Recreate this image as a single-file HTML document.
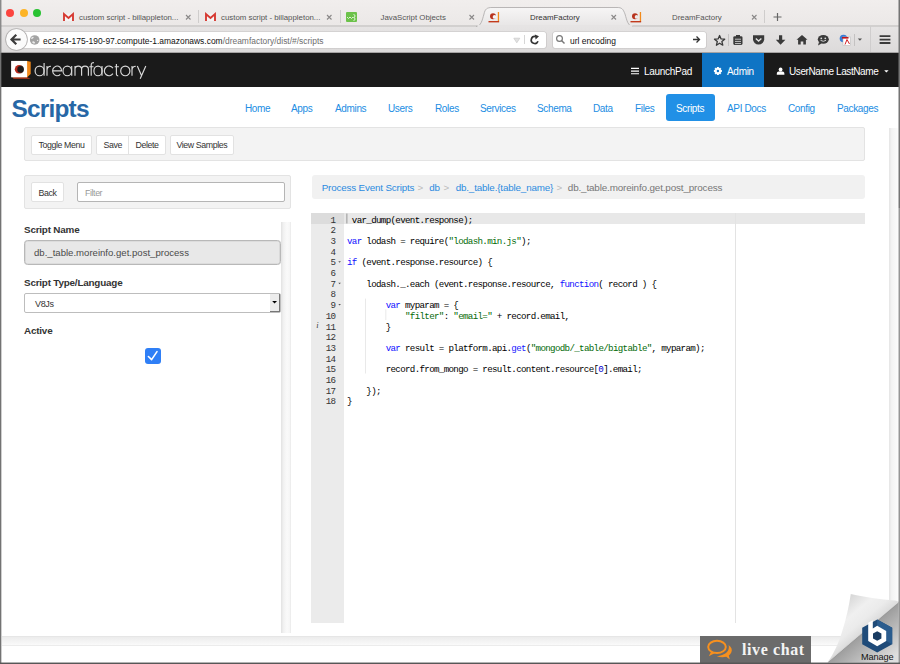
<!DOCTYPE html>
<html><head><meta charset="utf-8">
<style>
*{margin:0;padding:0;box-sizing:border-box}
html,body{width:900px;height:664px;overflow:hidden;background:#fff;font-family:"Liberation Sans",sans-serif}
.a{position:absolute}
.t{position:absolute;white-space:nowrap;line-height:1}
#tabbar{left:0;top:0;width:900px;height:26px;background:#e8e6e5}
#toolbar{left:0;top:26px;width:900px;height:27px;background:#dedcdc;border-top:1px solid #cfcdcc;border-bottom:1px solid #b9b7b7}
#hdr{left:0;top:53px;width:900px;height:34px;background:#1a1a1a}
.nav{font-size:10px;letter-spacing:-0.35px;color:#218de3}
.btn{position:absolute;background:#fff;border:1px solid #e2e2e2;border-radius:2px}
.bt{font-size:8.8px;letter-spacing:-0.4px;color:#333}
.code{font-family:"Liberation Mono",monospace;font-size:9.2px;letter-spacing:-0.68px;line-height:10.7px;white-space:pre;color:#000}
.ln{position:absolute;left:311px;width:24.3px;text-align:right;font-family:"Liberation Mono",monospace;font-size:9.2px;letter-spacing:-0.68px;line-height:10.7px;color:#333}
.kw{color:#1010ff}
.str{color:#036a07}
.num{color:#0000cd}
.fn{color:#1a1aff}
</style></head><body>
<!-- browser chrome -->
<div class="a" style="left:0;top:0;width:900px;height:26px;background:linear-gradient(#f1eeed,#ebe8e7)"></div>
<div class="a" style="left:0;top:26px;width:900px;height:27px;background:linear-gradient(#e6e4e4,#dcdada)"></div>
<div class="a" style="left:0;top:25px;width:900px;height:1.5px;background:#d2d0cf"></div>
<div class="a" style="left:6px;top:9px;width:8px;height:8px;border-radius:50%;background:#fc453f"></div>
<div class="a" style="left:20px;top:9px;width:8px;height:8px;border-radius:50%;background:#fdb426"></div>
<div class="a" style="left:33px;top:9px;width:8px;height:8px;border-radius:50%;background:#29c232"></div>
<svg class="a" style="left:0;top:0" width="900" height="27">
 <defs><linearGradient id="atab" x1="0" y1="7" x2="0" y2="27" gradientUnits="userSpaceOnUse"><stop offset="0" stop-color="#f7f6f6"/><stop offset="1" stop-color="#e7e5e5"/></linearGradient></defs>
 <path d="M476,26.5 C481,26 482,21 484,14 C485,9 487,7.5 492,7.5 L617,7.5 C622,7.5 623,9 625,14 C627,21 628,26 633,26.5" fill="url(#atab)" stroke="#a9a7a7" stroke-width="0.8"/>
 <rect x="477.5" y="25" width="155" height="2" fill="#e6e4e4"/>
 <line x1="198.5" y1="10" x2="198.5" y2="23" stroke="#cfcdcc" stroke-width="1"/>
 <line x1="340.5" y1="10" x2="340.5" y2="23" stroke="#cfcdcc" stroke-width="1"/>
 <line x1="764.5" y1="10" x2="764.5" y2="23" stroke="#cfcdcc" stroke-width="1"/>
 <!-- gmail icons -->
 <g transform="translate(63,13)"><rect x="0.5" y="0.5" width="10" height="7.5" fill="#f4f4f4"/><path d="M1,8 V1 L5.5,5 L10,1 V8" fill="none" stroke="#d63a32" stroke-width="1.9"/></g>
 <g transform="translate(205,13)"><rect x="0.5" y="0.5" width="10" height="7.5" fill="#f4f4f4"/><path d="M1,8 V1 L5.5,5 L10,1 V8" fill="none" stroke="#d63a32" stroke-width="1.9"/></g>
 <!-- w3 icon -->
 <rect x="346" y="12" width="11" height="10" rx="1" fill="#6cc24a"/>
 <path d="M347,17 l1.5,1.5 l1.5,-1.5 l1.5,1.5 l1.5,-1.5 M353.5,14.5 a1.5,1.5 0 1 1 0,3 a1.5,1.5 0 1 1 0,3" fill="none" stroke="#e9f7e2" stroke-width="0.9"/>
 <!-- df icons -->
 <g transform="translate(489,12)"><circle cx="4" cy="4.2" r="3" fill="#b8321c"/><circle cx="5.6" cy="4.9" r="1.9" fill="#f4f3f3"/><rect x="8.8" y="0" width="1.3" height="10" fill="#f28a1b"/><rect x="-0.5" y="9" width="10.6" height="1.4" fill="#c23a1c"/></g>
 <g transform="translate(631,12)"><circle cx="4" cy="4.2" r="3" fill="#b8321c"/><circle cx="5.6" cy="4.9" r="1.9" fill="#ece9e8"/><rect x="8.8" y="0" width="1.3" height="10" fill="#f28a1b"/><rect x="-0.5" y="9" width="10.6" height="1.4" fill="#c23a1c"/></g>
 <!-- close x -->
 <g stroke="#8a8888" stroke-width="1.1" fill="none">
  <path d="M186,15 l4.5,4.5 M190.5,15 l-4.5,4.5"/>
  <path d="M327,15 l4.5,4.5 M331.5,15 l-4.5,4.5"/>
  <path d="M469.5,15 l4.5,4.5 M474,15 l-4.5,4.5"/>
  <path d="M611.5,15 l4.5,4.5 M616,15 l-4.5,4.5"/>
  <path d="M752,15 l4.5,4.5 M756.5,15 l-4.5,4.5"/>
 </g>
 <path d="M777.5,13 v8 M773.5,17 h8" stroke="#666" stroke-width="1.2"/>
</svg>
<div class="t" style="left:79px;top:13.5px;font-size:7.85px;color:#555">custom script - billappleton...</div>
<div class="t" style="left:221px;top:13.5px;font-size:7.85px;color:#555">custom script - billappleton...</div>
<div class="t" style="left:380.5px;top:13.5px;font-size:7.85px;color:#555">JavaScript Objects</div>
<div class="t" style="left:530px;top:13.5px;font-size:7.85px;color:#333">DreamFactory</div>
<div class="t" style="left:672px;top:13.5px;font-size:7.85px;color:#555">DreamFactory</div>

<!-- toolbar -->
<div class="a" style="left:0;top:52px;width:900px;height:1px;background:#a5a3a3"></div>
<div class="a" style="left:20px;top:32px;width:526px;height:16px;background:#fff;border-radius:2px;box-shadow:0 0 0 0.6px #c4c2c2"></div>
<div class="a" style="left:553px;top:32px;width:153px;height:16px;background:#fff;border-radius:2px;box-shadow:0 0 0 0.6px #c4c2c2"></div>
<div class="a" style="left:5.5px;top:29px;width:21px;height:21px;border-radius:50%;background:#fbfbfb;box-shadow:0 0 0 0.8px #b0aeae"></div>
<svg class="a" style="left:0;top:26px" width="900" height="27">
 <path d="M19.5,13.5 h-7 M15.5,9.5 l-4,4 l4,4" fill="none" stroke="#3b3b3b" stroke-width="2.2" stroke-linecap="square"/>
 <circle cx="34.7" cy="13.95" r="4.8" fill="#a3a3a3"/>
 <ellipse cx="32.4" cy="11.9" rx="1.4" ry="0.8" transform="rotate(-35 32.4 11.9)" fill="#ececec"/>
 <ellipse cx="33.6" cy="16.3" rx="1.5" ry="1" transform="rotate(25 33.6 16.3)" fill="#ececec"/>
 <circle cx="37.6" cy="14.4" r="0.7" fill="#e6e6e6"/>
 <path d="M513.8,12.2 h6 l-3,4.6 z" fill="#e2e2e2" stroke="#c8c8c8" stroke-width="0.7"/>
 <line x1="524.5" y1="9" x2="524.5" y2="18" stroke="#d6d6d6"/>
 <path d="M538,15.3 A3.5,3.5 0 1 1 535.6,10.6" fill="none" stroke="#333" stroke-width="1.7"/>
 <path d="M534.8,8.4 L539,10.3 L535.6,13.4 Z" fill="#333"/>
 <circle cx="559.5" cy="12.5" r="2.9" fill="none" stroke="#777" stroke-width="1.2"/>
 <path d="M561.5,14.5 l3,3" stroke="#777" stroke-width="1.4"/>
 <path d="M693,13.5 h6.5 M696.5,10.5 l3,3 l-3,3" fill="none" stroke="#333" stroke-width="1.3"/>
 <!-- star -->
 <path d="M719.6,9.5 l1.5,3.4 l3.6,0.3 l-2.8,2.4 l0.9,3.6 l-3.2,-2 l-3.2,2 l0.9,-3.6 l-2.8,-2.4 l3.6,-0.3 z" fill="none" stroke="#3a3a3a" stroke-width="1.3" stroke-linejoin="round"/>
 <line x1="728.5" y1="8" x2="728.5" y2="20" stroke="#c4c2c2"/>
 <!-- clipboard -->
 <rect x="733.3" y="10.3" width="9.2" height="8.6" rx="1.3" fill="#3a3a3a"/>
 <rect x="736" y="9" width="4" height="2" fill="#3a3a3a"/>
 <path d="M735,13.2 h6 M735,15.4 h6 M735,17.6 h6" stroke="#d4d4d4" stroke-width="0.9"/>
 <!-- pocket -->
 <path d="M753,9.2 h11.2 v4 a5.6,5.3 0 0 1 -11.2,0 z" fill="#3a3a3a"/>
 <path d="M755.8,12.5 l2.8,2.6 l2.8,-2.6" fill="none" stroke="#e2e2e2" stroke-width="1.3"/>
 <!-- download -->
 <path d="M779,9.2 h3.2 v4.6 h3.2 l-4.8,5 l-4.8,-5 h3.2 z" fill="#3a3a3a"/>
 <!-- home -->
 <path d="M802,9 l5.5,4.8 h-1.6 v4.6 h-2.6 v-3 h-2.6 v3 h-2.6 v-4.6 h-1.6 z" fill="#3a3a3a"/>
 <!-- chat -->
 <ellipse cx="823.3" cy="13.3" rx="5.5" ry="4.4" fill="#3a3a3a"/>
 <path d="M819,16 l-1,3.5 l3.5,-2" fill="#3a3a3a"/>
 <circle cx="821.3" cy="12.3" r="0.9" fill="#ddd"/><circle cx="825.3" cy="12.3" r="0.9" fill="#ddd"/>
 <path d="M820.5,14.3 q2.8,2 5.6,0" stroke="#ddd" stroke-width="0.9" fill="none"/>
 <!-- pdf -->
 <circle cx="843.5" cy="12.5" r="3.8" fill="#3a7bd5"/>
 <rect x="843" y="11" width="7.5" height="8.5" fill="#fff" stroke="#bbb" stroke-width="0.6"/>
 <rect x="842" y="11" width="6.5" height="1.6" fill="#c0141a"/>
 <path d="M845,18.5 l2,-5 l2.5,4.5" stroke="#d21f25" stroke-width="1" fill="none"/>
 <line x1="854.5" y1="8" x2="854.5" y2="20" stroke="#c4c2c2"/>
 <path d="M857.8,12.5 h4.2 l-2.1,2.2 z" fill="#555"/>
 <line x1="870.5" y1="0" x2="870.5" y2="26" stroke="#cfcdcd"/>
 <path d="M879.6,10.2 h10.8 M879.6,13.6 h10.8 M879.6,17 h10.8" stroke="#3a3a3a" stroke-width="1.8"/>
</svg>
<div class="t" style="left:43px;top:36.5px;font-size:8.45px;color:#111">ec2-54-175-190-97.compute-1.amazonaws.com<span style="color:#6e6e6e">/dreamfactory/dist/#/scripts</span></div>
<div class="t" style="left:570px;top:36.5px;font-size:8.45px;color:#111">url encoding</div>

<!-- dark header -->
<div id="hdr" class="a"></div>
<svg class="a" style="left:0;top:53px" width="160" height="34">
 <g transform="translate(0,-53)">
 <path d="M12.4,77.3 L27.1,77.3 L30.7,74 L30.7,61.8 L27.1,61 Z" fill="#f28a1b"/>
 <path d="M12.4,77.3 L27.1,77.3 L30.7,78.7 L13.6,78.7 Z" fill="#c23a1c"/>
 <rect x="11.1" y="60.9" width="16" height="16.4" fill="#ffffff"/>
 <circle cx="19.1" cy="69.3" r="4.3" fill="#b8291c"/>
 <path d="M19.8,65.1 A4.3,4.3 0 0 1 19.8,73.5 A3.4,4.2 0 0 0 19.8,65.1 Z" fill="#1a1a1a"/>
 <circle cx="20.6" cy="69.4" r="3.3" fill="#1a1a1a"/>
 <g fill="none" stroke="#dadada" stroke-width="1.15">
  <ellipse cx="39.6" cy="70.9" rx="4.5" ry="4.85"/><path d="M44.1,63 V75.8"/>
  <path d="M47,66 V75.8 M47,70.5 Q47,66.2 51,66.2"/>
  <path d="M52.6,70.9 H61.6 A4.5,4.85 0 1 0 60.3,74.3"/>
  <ellipse cx="67.3" cy="70.9" rx="4.3" ry="4.85"/><path d="M71.7,66 V75.8"/>
  <path d="M75,66 V75.8 M75,69.2 Q75,66.1 78.3,66.1 Q81.6,66.1 81.6,69.2 V75.8 M81.6,69.2 Q81.6,66.1 85,66.1 Q88.4,66.1 88.4,69.2 V75.8"/>
  <path d="M91.2,75.8 V65 Q91.2,62.5 93.9,62.6 M89.3,66.7 H93.5"/>
  <ellipse cx="98" cy="70.9" rx="4.1" ry="4.85"/><path d="M102,66 V75.8"/>
  <path d="M112.9,68.1 A4.7,4.85 0 1 0 112.9,73.7"/>
  <path d="M116.4,64 V74.3 Q116.4,75.8 118.2,75.8 M114.7,66.7 H118.9"/>
  <ellipse cx="125.3" cy="70.9" rx="4.6" ry="4.85"/>
  <path d="M132,66 V75.8 M132,70.5 Q132,66.2 135.8,66.2"/>
  <path d="M137.3,66 L141.5,75.5 M145.8,66 L140.2,78.8"/>
 </g>
 </g>
</svg>
<svg class="a" style="left:620px;top:53px" width="280" height="34">
 <g transform="translate(-620,-53)">
 <path d="M631,68.4 h8 M631,71.1 h8 M631,73.8 h8" stroke="#fff" stroke-width="1.1"/>
 </g>
</svg>
<div class="t" style="left:644px;top:67px;font-size:10px;letter-spacing:-0.3px;color:#fff">LaunchPad</div>
<div class="a" style="left:702px;top:53px;width:62px;height:34px;background:#0f74c4"></div>
<div class="t" style="left:727px;top:67px;font-size:10px;letter-spacing:-0.3px;color:#fff">Admin</div>
<svg class="a" style="left:700px;top:53px" width="200" height="34">
 <g transform="translate(-700,-53)">
 <g transform="translate(717.9,71)" fill="#fff">
  <circle r="2.9"/>
  <g id="teeth"><rect x="-1" y="-4" width="2" height="8"/><rect x="-4" y="-1" width="8" height="2"/><rect x="-1" y="-4" width="2" height="8" transform="rotate(45)"/><rect x="-1" y="-4" width="2" height="8" transform="rotate(-45)"/></g>
  <circle r="1.2" fill="#0f74c4"/>
 </g>
 <circle cx="780.6" cy="69.4" r="1.9" fill="#fff"/>
 <path d="M776.8,74.7 v-1 q0,-2.4 3.8,-2.4 q3.8,0 3.8,2.4 v1 z" fill="#fff"/>
 <path d="M884.2,70.3 h4.4 l-2.2,2.2 z" fill="#fff"/>
 </g>
</svg>
<div class="t" style="left:789px;top:67px;font-size:10px;letter-spacing:-0.4px;color:#fff">UserName LastName</div>

<!-- page title -->
<div class="t" style="left:11.5px;top:97px;font-size:24.4px;letter-spacing:-0.78px;font-weight:bold;color:#2767a6">Scripts</div>
<div class="a" style="left:666px;top:94px;width:49px;height:27px;background:#2190e6;border-radius:3px"></div>
<div class="t nav" style="left:245px;top:103.5px">Home</div>
<div class="t nav" style="left:291px;top:103.5px">Apps</div>
<div class="t nav" style="left:335px;top:103.5px">Admins</div>
<div class="t nav" style="left:388px;top:103.5px">Users</div>
<div class="t nav" style="left:435px;top:103.5px">Roles</div>
<div class="t nav" style="left:480px;top:103.5px">Services</div>
<div class="t nav" style="left:537px;top:103.5px">Schema</div>
<div class="t nav" style="left:593px;top:103.5px">Data</div>
<div class="t nav" style="left:635px;top:103.5px">Files</div>
<div class="t nav" style="left:676px;top:103.5px;color:#fff">Scripts</div>
<div class="t nav" style="left:727px;top:103.5px">API Docs</div>
<div class="t nav" style="left:788px;top:103.5px">Config</div>
<div class="t nav" style="left:837px;top:103.5px">Packages</div>

<!-- toolbar panel -->
<div class="a" style="left:24px;top:127px;width:841px;height:34px;background:#f3f3f3;border:1px solid #e3e3e3;border-radius:2px"></div>
<div class="btn" style="left:31px;top:135px;width:61px;height:20px"></div>
<div class="btn" style="left:96px;top:135px;width:70px;height:20px"></div>
<div class="a" style="left:128px;top:135px;width:1px;height:20px;background:#e2e2e2"></div>
<div class="btn" style="left:170px;top:135px;width:64px;height:20px"></div>
<div class="t bt" style="left:38.5px;top:141px">Toggle Menu</div>
<div class="t bt" style="left:103.5px;top:141px">Save</div>
<div class="t bt" style="left:135.5px;top:141px">Delete</div>
<div class="t bt" style="left:176.5px;top:141px">View Samples</div>

<!-- left panel -->
<div class="a" style="left:24px;top:175px;width:267px;height:34px;background:#f3f3f3;border:1px solid #e3e3e3;border-radius:2px"></div>
<div class="btn" style="left:31px;top:182px;width:33px;height:20px"></div>
<div class="t bt" style="left:38.5px;top:189px">Back</div>
<div class="a" style="left:77px;top:182px;width:208px;height:20px;background:#fff;border:1px solid #b5b5b5;border-radius:2px"></div>
<div class="t bt" style="left:85px;top:189px;color:#999">Filter</div>

<div class="t" style="left:24px;top:225px;font-size:9.9px;letter-spacing:-0.2px;font-weight:bold;color:#333">Script Name</div>
<div class="a" style="left:24px;top:240px;width:257px;height:25px;background:#e8e8e8;border:1px solid #b8b8b8;box-shadow:inset 0 0 0 0.6px #cfcfcf;border-radius:3.5px"></div>
<div class="t" style="left:34px;top:248px;font-size:9.58px;color:#4a4a4a">db._table.moreinfo.get.post_process</div>
<div class="t" style="left:24px;top:278px;font-size:9.9px;letter-spacing:-0.2px;font-weight:bold;color:#333">Script Type/Language</div>
<div class="a" style="left:24px;top:293px;width:257px;height:20px;background:#fff;border:1px solid #bdbdbd;border-radius:2px"></div>
<div class="t" style="left:35px;top:299.5px;font-size:9px;letter-spacing:-0.35px;color:#333">V8Js</div>
<div class="t" style="left:24px;top:326px;font-size:9.9px;letter-spacing:-0.2px;font-weight:bold;color:#333">Active</div>
<div class="a" style="left:145px;top:348px;width:15.5px;height:15.5px;background:#2f7ff6;border-radius:3px"></div>
<svg class="a" style="left:140px;top:342px" width="25" height="26"><path d="M8.4,14.5 L11.6,17.6 L17,9.6" fill="none" stroke="#fff" stroke-width="1.6" stroke-linecap="round" stroke-linejoin="round"/></svg>
<div class="a" style="left:270.4px;top:294px;width:9.6px;height:18px;background:#ececec;border-right:1.5px solid #777;border-bottom:1.5px solid #777"></div>
<svg class="a" style="left:270px;top:294px" width="10" height="18"><path d="M2.2,7 h4.8 l-2.4,2.6 z" fill="#000"/></svg>

<!-- scroll track left -->
<div class="a" style="left:281px;top:222px;width:10px;height:411px;background:linear-gradient(to right,#e2e2e2,#f1f1f1 25%,#fafafa 60%,#f6f6f6 85%,#e9e9e9)"></div>

<!-- breadcrumb -->
<div class="a" style="left:312px;top:175px;width:553px;height:24px;background:#f1f1f1;border-radius:3px"></div>
<div class="t" style="left:321.7px;top:182.5px;font-size:9.8px;letter-spacing:-0.15px;color:#2b8be0">Process Event Scripts</div>
<div class="t" style="left:417.5px;top:182.5px;font-size:9.8px;letter-spacing:-0.15px;color:#bbb">&gt;</div>
<div class="t" style="left:429.3px;top:182.5px;font-size:9.8px;letter-spacing:-0.15px;color:#2b8be0">db</div>
<div class="t" style="left:443.5px;top:182.5px;font-size:9.8px;letter-spacing:-0.15px;color:#bbb">&gt;</div>
<div class="t" style="left:455.7px;top:182.5px;font-size:9.8px;letter-spacing:-0.15px;color:#2b8be0">db._table.{table_name}</div>
<div class="t" style="left:556.5px;top:182.5px;font-size:9.8px;letter-spacing:-0.15px;color:#bbb">&gt;</div>
<div class="t" style="left:567.8px;top:182.5px;font-size:9.9px;letter-spacing:-0.15px;color:#777">db._table.moreinfo.get.post_process</div>

<!-- editor -->
<div class="a" style="left:311px;top:213px;width:33px;height:410px;background:#ebebeb"></div>
<div class="a" style="left:311px;top:213px;width:33px;height:11px;background:#dcdcdc"></div>
<div class="a" style="left:344px;top:213px;width:521px;height:11px;background:#e8e8e8"></div>
<div class="a" style="left:735px;top:213px;width:1px;height:410px;background:#e3e3e3"></div>


<svg class="a" style="left:311px;top:213px" width="120" height="200">
 <g transform="translate(-311,-213)">
 <rect x="346" y="213.5" width="1.6" height="10" fill="#b5b5b5"/>
 <line x1="365.5" y1="298.6" x2="365.5" y2="373.5" stroke="#e3e3e3" stroke-width="0.8"/>
 <line x1="385.8" y1="309.3" x2="385.8" y2="320" stroke="#e3e3e3" stroke-width="0.8"/>
 <path d="M338.3,261.3 h2.6 l-1.3,1.5 z M338.3,282.7 h2.6 l-1.3,1.5 z M338.3,304.1 h2.6 l-1.3,1.5 z" fill="#555"/>
 </g>
</svg>
<div class="t" style="left:316.3px;top:321px;font-family:'Liberation Serif',serif;font-style:italic;font-size:8.5px;color:#444">i</div>
<div class="a code" style="left:347px;top:215.5px"> var_dump(event.response);

<span class="kw">var</span> lodash = require(<span class="str">"lodash.min.js"</span>);

<span class="kw">if</span> (event.response.resource) {

    lodash._.each (event.response.resource, <span class="kw">function</span>( record ) {

        <span class="kw">var</span> myparam = {
            <span class="str">"filter"</span>: <span class="str">"email="</span> + record.email,
        }

        <span class="kw">var</span> result = platform.api.<span class="fn">get</span>(<span class="str">"mongodb/_table/bigtable"</span>, myparam);

        record.from_mongo = result.content.resource[<span class="num">0</span>].email;

    });
}</div>
<div class="ln" style="top:215.5px;line-height:10.7px;white-space:pre">1
2
3
4
5
6
7
8
9
10
11
12
13
14
15
16
17
18</div>

<!-- bottom scrollbar -->
<div class="a" style="left:2px;top:636px;width:887px;height:10px;background:linear-gradient(#ececec,#fafafa);border-top:1px solid #e6e6e6;border-bottom:1px solid #ececec"></div>

<!-- right scrollbar -->
<div class="a" style="left:889px;top:128px;width:9px;height:536px;background:linear-gradient(to right,#e4e4e4,#f3f3f3 30%,#fbfbfb)"></div>

<!-- live chat -->
<div class="a" style="left:700px;top:636px;width:111px;height:27px;background:#6b6b6b"></div>
<svg class="a" style="left:700px;top:634px" width="40" height="30">
 <g transform="translate(-700,-634)">
 <path d="M728.6,645 C731.5,647 732.6,650 731.3,652.5 C730.5,654 729.5,655 728.8,655.6 L729.8,659.6 L726.3,656.8 C723,657.6 719.5,657.4 716.7,656.2 C721.5,655.8 726.8,653.6 728.3,650 C729,648.3 729,646.5 728.6,645 Z" fill="#f7901e"/>
 <ellipse cx="717" cy="646.9" rx="8.8" ry="6.1" fill="none" stroke="#f7901e" stroke-width="2"/>
 <path d="M711.2,651.5 L708.8,656.2 L715,653" fill="#f7901e"/>
 </g>
</svg>
<div class="t" style="left:742px;top:642px;font-family:'Liberation Serif',serif;font-weight:bold;font-size:16px;letter-spacing:0.6px;color:#f4f4f4">live chat</div>

<!-- manage corner -->
<svg class="a" style="left:820px;top:585px" width="80" height="79">
 <defs>
  <linearGradient id="rev" x1="872" y1="624" x2="897" y2="654" gradientUnits="userSpaceOnUse">
   <stop offset="0" stop-color="#9c9c9c"/><stop offset="0.5" stop-color="#bdbdbd"/><stop offset="1" stop-color="#dedede"/>
  </linearGradient>
  <linearGradient id="flap" x1="874.8" y1="622.4" x2="850.8" y2="594.1" gradientUnits="userSpaceOnUse">
   <stop offset="0" stop-color="#dcdcdc"/><stop offset="0.25" stop-color="#ebebeb"/><stop offset="0.55" stop-color="#f0f0f0"/><stop offset="1" stop-color="#d6d6d6"/>
  </linearGradient>
 </defs>
 <g transform="translate(-820,-585)">
 <path d="M898.6,601.5 L898.6,662.5 L827.5,662.5 Z" fill="url(#rev)"/>
 <path d="M850.8,594.1 C862,597 882,599.6 894.5,600.6 C897,600.9 898.6,601.6 898.6,602.6 L828,662 C834,653 839,642 842,632 C846,620 849,606 850.8,594.1 Z" fill="url(#flap)"/>
 <path d="M898.6,602.6 L828,662" stroke="rgba(0,0,0,0.06)" stroke-width="1.2"/>
 <g transform="translate(877.2,636)">
  <path d="M0,-16.4 L15,-8.2 L15,8.2 L0,16.4 L-15,8.2 L-15,-8.2 Z" fill="#1f4b79"/>
  <path d="M0,-16.4 L15,-8.2 L15,8.2 L8.6,4.8 L8.6,-4.8 L0,-9.6 Z" fill="#2a5c8e"/>
  <path d="M-9,-13.2 L-4.4,-15.8 L-4.4,-7.6 L0,-10.2 L9,-5 L9,5 L0,10.2 L-9,5 Z" fill="#ffffff"/>
  <path d="M0,-4.8 L4.2,-2.4 L4.2,2.4 L0,4.8 L-4.2,2.4 L-4.2,-2.4 Z" fill="#193c62"/>
 </g>
 </g>
</svg>
<div class="t" style="left:861px;top:652.5px;font-size:9.2px;letter-spacing:-0.1px;color:#111">Manage</div>

<!-- window border -->
<div class="a" style="left:0;top:0;width:1px;height:53px;background:#8a8a8a"></div>
<div class="a" style="left:0;top:53px;width:1px;height:611px;background:#737373"></div>
<div class="a" style="left:1px;top:0;width:1px;height:664px;background:rgba(115,115,115,0.35)"></div>
<div class="a" style="left:899px;top:0;width:1px;height:208px;background:#747474"></div>
<div class="a" style="left:898px;top:0;width:1px;height:208px;background:rgba(116,116,116,0.5)"></div>
<div class="a" style="left:899px;top:208px;width:1px;height:456px;background:#959595"></div>
<div class="a" style="left:898px;top:208px;width:1px;height:456px;background:rgba(150,150,150,0.5)"></div>
<div class="a" style="left:0;top:663px;width:900px;height:1px;background:#575757"></div>
<div class="a" style="left:0;top:662px;width:900px;height:1px;background:rgba(87,87,87,0.45)"></div>

</body></html>
